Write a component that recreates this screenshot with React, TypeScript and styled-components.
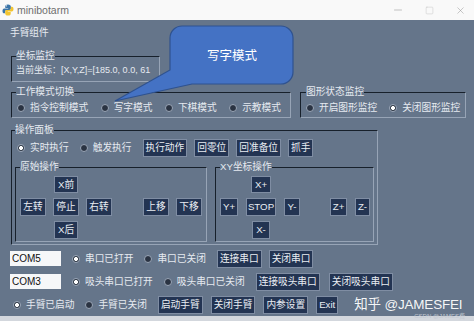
import React from 'react';
import styled, { createGlobalStyle } from 'styled-components';
import { Minus, Square, X } from 'lucide-react';

const GlobalStyle = createGlobalStyle`
  html, body {
    margin: 0;
    padding: 0;
  }
  body {
    width: 474px;
    height: 321px;
    overflow: hidden;
    background: #65758a;
    font-family: "Liberation Sans", "Noto Sans CJK SC", sans-serif;
  }
`;

const Window = styled.div`
  position: relative;
  width: 474px;
  height: 321px;
  display: flex;
  flex-direction: column;
  overflow: hidden;
  background: #65758a;
`;

const TitleBar = styled.div`
  flex: none;
  height: 20px;
  box-sizing: border-box;
  display: flex;
  align-items: center;
  padding: 0 8px 0 2px;
  background: #f9f9f9;
`;

const Title = styled.span`
  margin-left: 3px;
  font-size: 10.5px;
  color: #6e6e6e;
`;

const WinButtons = styled.div`
  margin-left: auto;
  display: flex;
  align-items: center;
  gap: 21px;
  color: #8a8a8a;
`;

const Body = styled.div`
  position: relative;
  flex: 1;
  display: flex;
  flex-direction: column;
  align-items: flex-start;
  padding: 7px 0 0 11px;
  color: #e6eaf0;
  font-size: 9.7px;
  line-height: 12px;
`;

const Heading = styled.div`
  margin: 0 0 11px -1px;
`;

const Group = styled.fieldset<{ $w: number; $pad: string }>`
  box-sizing: border-box;
  width: ${(p) => p.$w}px;
  min-width: 0;
  margin: 0;
  padding: ${(p) => p.$pad};
  border: 1px solid;
  border-color: #17202b #97a4b6 #97a4b6 #17202b;
`;

const Legend = styled.legend`
  padding: 0;
  font-size: 9.7px;
  line-height: 12px;
  color: #e6eaf0;
`;

const Coords = styled.div`
  white-space: nowrap;
  font-size: 9px;
`;

const GroupRow = styled.div<{ $gap: number; $mt: number }>`
  display: flex;
  align-items: flex-start;
  gap: ${(p) => p.$gap}px;
  margin-top: ${(p) => p.$mt}px;
`;

const Options = styled.div<{ $gap: number; $ml?: number }>`
  display: flex;
  align-items: center;
  gap: ${(p) => p.$gap}px;
  margin-left: ${(p) => p.$ml ?? 0}px;
  height: 12px;
`;

const RadioItem = styled.label`
  display: inline-flex;
  align-items: center;
  gap: 5px;
  white-space: nowrap;
  font-size: 9.7px;
  color: #e6eaf0;
`;

const Dot = styled.span<{ $on?: boolean }>`
  flex: none;
  width: 8px;
  height: 8px;
  box-sizing: border-box;
  border-radius: 50%;
  border: 1px solid #9aa6b7;
  background: ${(p) =>
    p.$on ? 'radial-gradient(circle, #ffffff 0 1.6px, #27303d 2.3px)' : '#2a3342'};
`;

const Btn = styled.button`
  flex: none;
  height: 18px;
  box-sizing: border-box;
  display: inline-flex;
  align-items: center;
  justify-content: center;
  padding: 0 2px;
  margin: 0;
  border: 1px solid #7f8da3;
  background: #233452;
  color: #e9edf3;
  font-family: "Liberation Sans", "Noto Sans CJK SC", sans-serif;
  font-size: 9.7px;
  line-height: 1;
  white-space: nowrap;
  cursor: pointer;
`;

const PadButton = styled(Btn)<{ $c: number; $r: number; $center?: boolean }>`
  grid-column: ${(p) => p.$c};
  grid-row: ${(p) => p.$r};
  height: 100%;
  justify-self: ${(p) => (p.$center ? 'center' : 'stretch')};
  padding: 0 3px;
`;

const Pad = styled.div<{ $cols: string; $gap: number }>`
  display: grid;
  grid-template-columns: ${(p) => p.$cols};
  grid-template-rows: 17px 18px 18px;
  column-gap: ${(p) => p.$gap}px;
  row-gap: 5px;
`;

const ActionRow = styled.div`
  display: flex;
  align-items: center;
  gap: 11px;
  height: 18px;
  margin-left: 2px;
`;

const ButtonSet = styled.div<{ $gap: number }>`
  display: flex;
  align-items: center;
  gap: ${(p) => p.$gap}px;
`;

const BottomRows = styled.div`
  display: flex;
  flex-direction: column;
  gap: 4px;
  margin: 4px 0 0 -1px;
`;

const ControlRow = styled.div<{ $ml?: number }>`
  display: flex;
  align-items: center;
  gap: 11px;
  height: 19px;
  padding-left: ${(p) => p.$ml ?? 0}px;
`;

const PortField = styled.input`
  width: 51px;
  height: 15px;
  box-sizing: border-box;
  margin: 0;
  padding: 0 2px;
  border: none;
  background: #f6f7f9;
  color: #111;
  font-family: "Liberation Sans", sans-serif;
  font-size: 10px;
  outline: none;
`;

const Watermark = styled.span`
  margin-left: 5px;
  font-size: 13.5px;
  letter-spacing: -0.2px;
  color: rgba(255, 255, 255, 0.95);
  white-space: nowrap;
`;

const Footer = styled.div`
  flex: none;
  height: 5px;
  background: #d3d7dd;
`;

const SmallMark = styled.span`
  position: absolute;
  right: 9px;
  bottom: 2px;
  font-size: 6px;
  line-height: 6px;
  color: #c4cad3;
`;

const Callout = styled.div`
  position: absolute;
  left: 112px;
  top: 4px;
  width: 184px;
  height: 80px;
  pointer-events: none;
`;

function PyLogo() {
  const half = 'M5.5 0.4C3.1 0.4 2.8 1.4 2.8 2.5V3.9H5.7V4.5H1.6C0.6 4.5 0 5.4 0 6.9C0 8.5 0.7 9.2 1.6 9.2H2.6V7.7C2.6 6.7 3.4 6 4.4 6H7C7.8 6 8.3 5.4 8.3 4.6V2.5C8.3 1.4 7.4 0.4 5.5 0.4Z';
  return (
    <svg width="12" height="12" viewBox="0 0 11 12">
      <path d={half} fill="#3a74a8" />
      <path d={half} fill="#f3c530" transform="rotate(180 5.5 6)" />
      <circle cx="4" cy="1.8" r="0.6" fill="#fff" />
    </svg>
  );
}

function Radio({ label, on }: { label: string; on?: boolean }) {
  return (
    <RadioItem>
      <Dot $on={on} />
      {label}
    </RadioItem>
  );
}

export default function App() {
  return (
    <Window>
      <GlobalStyle />
      <TitleBar>
        <PyLogo />
        <Title>minibotarm</Title>
        <WinButtons>
          <Minus size={12} strokeWidth={1} />
          <Square size={9} strokeWidth={1.2} color="#c2c2c2" />
          <X size={11} strokeWidth={1} />
        </WinButtons>
      </TitleBar>

      <Body>
        <Heading>手臂组件</Heading>

        <Group $w={149} $pad="2px 4px 5px 4px">
          <Legend>坐标监控</Legend>
          <Coords>当前坐标：[X,Y,Z]=[185.0, 0.0, 61</Coords>
        </Group>

        <GroupRow $gap={9} $mt={4}>
          <Group $w={280} $pad="4px 4px 3px 4px">
            <Legend>工作模式切换</Legend>
            <Options $gap={12.5} $ml={1}>
              <Radio label="指令控制模式" />
              <Radio label="写字模式" />
              <Radio label="下棋模式" />
              <Radio label="示教模式" />
            </Options>
          </Group>
          <Group $w={166} $pad="4px 4px 3px 5px">
            <Legend>图形状态监控</Legend>
            <Options $gap={12}>
              <Radio label="开启图形监控" />
              <Radio label="关闭图形监控" on />
            </Options>
          </Group>
        </GroupRow>

        <GroupRow $gap={0} $mt={6}>
          <Group $w={367} $pad="3px 3px 2px 3px">
            <Legend>操作面板</Legend>
            <ActionRow>
              <Radio label="实时执行" on />
              <Radio label="触发执行" />
              <ButtonSet $gap={7}>
                <Btn>执行动作</Btn>
                <Btn>回零位</Btn>
                <Btn>回准备位</Btn>
                <Btn>抓手</Btn>
              </ButtonSet>
            </ActionRow>
            <GroupRow $gap={8} $mt={4}>
              <Group $w={192} $pad="3px 4px 2px 4px">
                <Legend>原始操作</Legend>
                <Pad $cols="26px 26px 26px 17px 26px 26px" $gap={7}>
                  <PadButton $c={2} $r={1} $center>X前</PadButton>
                  <PadButton $c={1} $r={2}>左转</PadButton>
                  <PadButton $c={2} $r={2}>停止</PadButton>
                  <PadButton $c={3} $r={2}>右转</PadButton>
                  <PadButton $c={5} $r={2}>上移</PadButton>
                  <PadButton $c={6} $r={2}>下移</PadButton>
                  <PadButton $c={2} $r={3} $center>X后</PadButton>
                </Pad>
              </Group>
              <Group $w={159} $pad="3px 4px 2px 4px">
                <Legend>XY坐标操作</Legend>
                <Pad $cols="18px 30px 16px 14px 17px 15px" $gap={8}>
                  <PadButton $c={2} $r={1} $center>X+</PadButton>
                  <PadButton $c={1} $r={2}>Y+</PadButton>
                  <PadButton $c={2} $r={2}>STOP</PadButton>
                  <PadButton $c={3} $r={2}>Y-</PadButton>
                  <PadButton $c={5} $r={2}>Z+</PadButton>
                  <PadButton $c={6} $r={2}>Z-</PadButton>
                  <PadButton $c={2} $r={3} $center>X-</PadButton>
                </Pad>
              </Group>
            </GroupRow>
          </Group>
        </GroupRow>

        <BottomRows>
          <ControlRow>
            <PortField readOnly defaultValue="COM5" />
            <Radio label="串口已打开" on />
            <Radio label="串口已关闭" />
            <ButtonSet $gap={7}>
              <Btn>连接串口</Btn>
              <Btn>关闭串口</Btn>
            </ButtonSet>
          </ControlRow>
          <ControlRow>
            <PortField readOnly defaultValue="COM3" />
            <Radio label="吸头串口已打开" on />
            <Radio label="吸头串口已关闭" />
            <ButtonSet $gap={9}>
              <Btn>连接吸头串口</Btn>
              <Btn>关闭吸头串口</Btn>
            </ButtonSet>
          </ControlRow>
          <ControlRow $ml={3}>
            <Radio label="手臂已启动" on />
            <Radio label="手臂已关闭" />
            <ButtonSet $gap={8}>
              <Btn>启动手臂</Btn>
              <Btn>关闭手臂</Btn>
              <Btn>内参设置</Btn>
              <Btn>Exit</Btn>
            </ButtonSet>
            <Watermark>知乎 @JAMESFEI</Watermark>
          </ControlRow>
        </BottomRows>

        <Callout>
          <svg width="184" height="80" viewBox="0 0 184 80">
            <path
              d="M70 2H169A12 12 0 0 1 181 14V48A12 12 0 0 1 169 60H80L3 77L58 46V14A12 12 0 0 1 70 2Z"
              fill="#4472c4"
              stroke="#2f528f"
              strokeWidth="1.2"
            />
            <text
              x="120"
              y="35.5"
              textAnchor="middle"
              fill="#ffffff"
              fontSize="12.5"
              fontFamily='"Noto Sans CJK SC", sans-serif'
            >
              写字模式
            </text>
          </svg>
        </Callout>
      </Body>
      <Footer />
      <SmallMark>CSDN @JAMES费</SmallMark>
    </Window>
  );
}
